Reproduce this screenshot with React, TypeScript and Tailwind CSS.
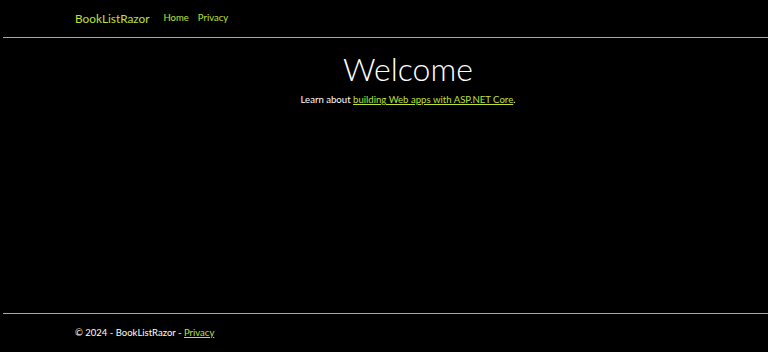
export default function App() {
  const lime = "text-[#bfe13a]";
  return (
    <div className="w-[768px] h-[352px] bg-black flex flex-col overflow-hidden" style={{ fontFamily: 'Lato, "Open Sans", sans-serif' }}>
      <header className="h-[38px] ml-[3px] border-b border-[#a8a8a8] flex items-center pl-[72px] shrink-0">
        <span className={`${lime} text-[11.8px] mr-[14px]`}>BookListRazor</span>
        <span className={`${lime} text-[9.5px] mr-[9px]`}>Home</span>
        <span className={`${lime} text-[9.5px]`}>Privacy</span>
      </header>
      <main className="flex-1 pl-[75px] pr-[27px] pt-[11px] flex flex-col items-center">
        <h1 className="text-white text-[32px] font-light leading-[40px]">Welcome</h1>
        <p className="text-white text-[9.6px] mt-[4px]">
          Learn about <a className={`${lime} underline`}>building Web apps with ASP.NET Core</a>.
        </p>
      </main>
      <footer className="h-[39px] ml-[3px] border-t border-[#a8a8a8] flex items-center pl-[72px] shrink-0">
        <span className="text-white text-[9.5px]">
          © 2024 - BookListRazor - <a className={`${lime} underline`}>Privacy</a>
        </span>
      </footer>
    </div>
  );
}
